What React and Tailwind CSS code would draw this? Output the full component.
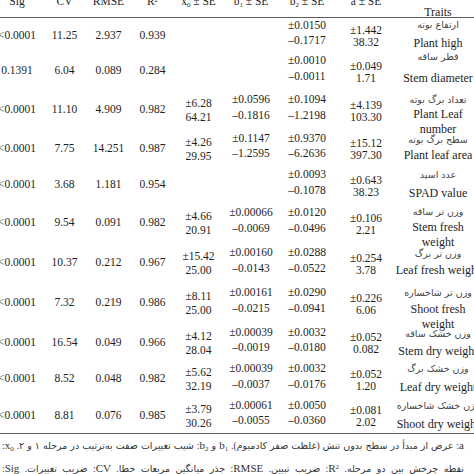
import React from "react";

// one entry per trait row, class strings kept in full so tailwind picks them up
const rows = [
  { h: "h-[34px]", tp: "pt-[2.5px]", gap: "mt-[6.5px]", sig: "<0.0001", cv: "11.25", rmse: "2.937", r2: "0.939", x0: null, b1: null, b2: ["±0.0150", "–0.1717"], a: ["±1.442", "38.32"], fa: "ارتفاع بوته", en: ["Plant high"] },
  { h: "h-[37.5px]", tp: "pt-[0.5px]", gap: "mt-[10px]", sig: "0.1391", cv: "6.04", rmse: "0.089", r2: "0.284", x0: null, b1: null, b2: ["±0.0010", "–0.0011"], a: ["±0.049", "1.71"], fa: "قطر ساقه", en: ["Stem diameter"] },
  { h: "h-[40px]", tp: "pt-[5.5px]", gap: "mt-[3.5px]", sig: "<0.0001", cv: "11.10", rmse: "4.909", r2: "0.982", x0: ["±6.28", "64.21"], b1: ["±0.0596", "–0.1816"], b2: ["±0.1094", "–1.2198"], a: ["±4.139", "103.30"], fa: "تعداد برگ بوته", en: ["Plant Leaf", "number"] },
  { h: "h-[37px]", tp: "pt-[6px]", gap: "mt-[3.5px]", sig: "<0.0001", cv: "7.75", rmse: "14.251", r2: "0.987", x0: ["±4.26", "29.95"], b1: ["±0.1147", "–1.2595"], b2: ["±0.9370", "–6.2636"], a: ["±15.12", "397.30"], fa: "سطح برگ بوته", en: ["Plant leaf area"] },
  { h: "h-[36.5px]", tp: "pt-[4px]", gap: "mt-[6.5px]", sig: "<0.0001", cv: "3.68", rmse: "1.181", r2: "0.954", x0: null, b1: null, b2: ["±0.0093", "–0.1078"], a: ["±0.643", "38.23"], fa: "عدد اسپد", en: ["SPAD value"] },
  { h: "h-[39.5px]", tp: "pt-[4px]", gap: "mt-[4.5px]", sig: "<0.0001", cv: "9.54", rmse: "0.091", r2: "0.982", x0: ["±4.66", "20.91"], b1: ["±0.00066", "–0.0069"], b2: ["±0.0120", "–0.0496"], a: ["±0.106", "2.21"], fa: "وزن تر ساقه", en: ["Stem fresh", "weight"] },
  { h: "h-[40px]", tp: "pt-[7px]", gap: "mt-[4.5px]", sig: "<0.0001", cv: "10.37", rmse: "0.212", r2: "0.967", x0: ["±15.42", "25.00"], b1: ["±0.00160", "–0.0143"], b2: ["±0.0288", "–0.0522"], a: ["±0.254", "3.78"], fa: "وزن تر برگ", en: ["Leaf fresh weight"] },
  { h: "h-[40.5px]", tp: "pt-[5.5px]", gap: "mt-[5.5px]", sig: "<0.0001", cv: "7.32", rmse: "0.219", r2: "0.986", x0: ["±8.11", "25.00"], b1: ["±0.00161", "–0.0215"], b2: ["±0.0290", "–0.0941"], a: ["±0.226", "6.06"], fa: "وزن تر شاخساره", en: ["Shoot fresh", "weight"] },
  { h: "h-[38px]", tp: "pt-[6.5px]", gap: "mt-[5.5px]", sig: "<0.0001", cv: "16.54", rmse: "0.049", r2: "0.966", x0: ["±4.12", "28.04"], b1: ["±0.00039", "–0.0019"], b2: ["±0.0032", "–0.0180"], a: ["±0.052", "0.082"], fa: "وزن خشک ساقه", en: ["Stem dry weight"] },
  { h: "h-[35.5px]", tp: "pt-[3.5px]", gap: "mt-[6.5px]", sig: "<0.0001", cv: "8.52", rmse: "0.048", r2: "0.982", x0: ["±5.62", "32.19"], b1: ["±0.00039", "–0.0037"], b2: ["±0.0032", "–0.0176"], a: ["±0.052", "1.20"], fa: "وزن خشک برگ", en: ["Leaf dry weight"] },
  { h: "h-[37px]", tp: "pt-[5px]", gap: "mt-[6.5px]", sig: "<0.0001", cv: "8.81", rmse: "0.076", r2: "0.985", x0: ["±3.79", "30.26"], b1: ["±0.00061", "–0.0055"], b2: ["±0.0050", "–0.0360"], a: ["±0.081", "2.02"], fa: "وزن خشک شاخساره", en: ["Shoot dry weight"] },
];

const Single = ({ w, v }) => (
  <div className={`${w} flex items-center justify-center leading-[14px]`}>{v}</div>
);

const Pair = ({ w, v, pad, lead }) => (
  <div className={`${w} flex flex-col items-center justify-center whitespace-nowrap ${pad} ${lead}`}>
    {v && (
      <>
        <span>{v[0]}</span>
        <span>{v[1]}</span>
      </>
    )}
  </div>
);

const Row = ({ r }) => (
  <div className={`flex ${r.h}`}>
    <Single w="w-[50px]" v={r.sig} />
    <Single w="w-[45px]" v={r.cv} />
    <Single w="w-[43px]" v={r.rmse} />
    <Single w="w-[45px]" v={r.r2} />
    <Pair w="w-[47px]" v={r.x0} pad="pt-[2px]" lead="leading-[14px]" />
    <Pair w="w-[58px]" v={r.b1} pad="pb-[3px]" lead="leading-[15.5px]" />
    <Pair w="w-[54px]" v={r.b2} pad="pb-[3px]" lead="leading-[15.5px]" />
    <Pair w="w-[64px]" v={r.a} pad="pt-[3px]" lead="leading-[12px]" />
    <div className={`w-[80px] flex flex-col items-center whitespace-nowrap ${r.tp}`}>
      <span dir="rtl" className="font-['DejaVu_Sans',sans-serif] text-[9.5px] leading-[10px] text-[#444]">
        {r.fa}
      </span>
      <div className={`${r.gap} flex flex-col items-center gap-[2px] text-[12px] leading-[13px]`}>
        {r.en.map((l) => (
          <span key={l}>{l}</span>
        ))}
      </div>
    </div>
  </div>
);

const Lat = ({ children }) => <span className="text-[11px]">{children}</span>;

export default function App() {
  return (
    <div className="w-[474px] h-[474px] overflow-hidden bg-white text-[#1e1e1e] font-['Liberation_Serif','DejaVu_Sans',serif] text-[11.5px]">
      <div className="-mt-[6px] -ml-[8px] w-[486px]">
        {/* header, top half is outside the crop */}
        <div className="flex h-[23.5px] border-b-[1.5px] border-[#5e5e5e] leading-[14px]">
          <div className="w-[50px] text-center">Sig</div>
          <div className="w-[45px] text-center">CV</div>
          <div className="w-[43px] text-center">RMSE</div>
          <div className="w-[45px] text-center">
            R<sup className="text-[7px]">2</sup>
          </div>
          <div className="w-[47px] text-center">
            x<sub className="text-[7px]">0</sub> ± SE
          </div>
          <div className="w-[58px] text-center">
            b<sub className="text-[7px]">1</sub> ± SE
          </div>
          <div className="w-[54px] text-center">
            b<sub className="text-[7px]">2</sub> ± SE
          </div>
          <div className="w-[64px] text-center">a ± SE</div>
          <div className="w-[80px] flex items-end justify-center">
            <span className="text-[12px] leading-[14px] -mb-[2px]">Traits</span>
          </div>
        </div>

        <div className="border-b-[1.5px] border-[#5e5e5e]">
          {rows.map((r, i) => (
            <Row key={i} r={r} />
          ))}
        </div>

        <div dir="rtl" className="pl-[10px] pr-[14px] text-[9.5px] leading-[22px] text-[#333]">
          <div className="whitespace-nowrap text-justify [text-align-last:justify]">
            <Lat>a</Lat>: عرض از مبدأ در سطح بدون تنش (غلظت صفر کادمیوم). <Lat>b<sub className="text-[7px]">1</sub></Lat> و{" "}
            <Lat>b<sub className="text-[7px]">2</sub></Lat>: شیب تغییرات صفت به‌ترتیب در مرحله ۱ و ۲.{" "}
            <Lat>x<sub className="text-[7px]">0</sub></Lat>:
          </div>
          <div className="whitespace-nowrap text-justify [text-align-last:justify]">
            نقطه چرخش بین دو مرحله. <Lat>R<sup className="text-[7px]">2</sup></Lat>: ضریب تبیین. <Lat>RMSE</Lat>: جذر میانگین مربعات
            خطا. <Lat>CV</Lat>: ضریب تغییرات. <Lat>Sig</Lat>:
          </div>
        </div>
      </div>
    </div>
  );
}
